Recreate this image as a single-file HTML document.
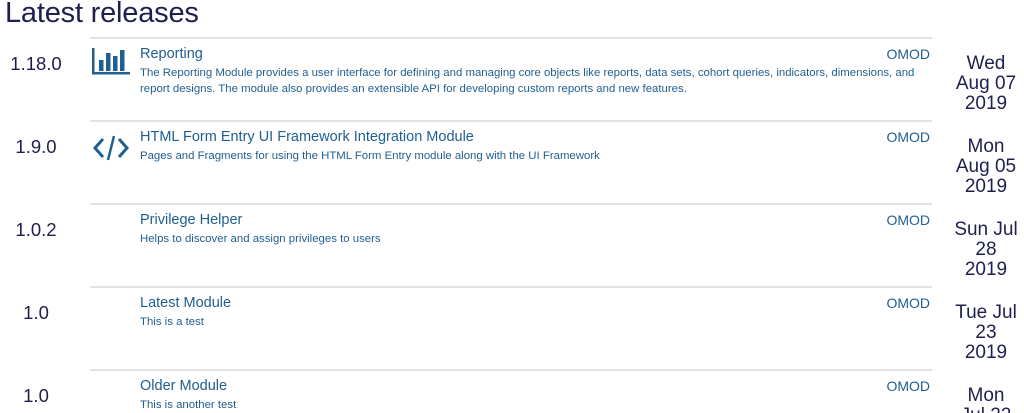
<!DOCTYPE html>
<html><head><style>
html,body{margin:0;width:1024px;height:413px;overflow:hidden}
body{background:#fff;font-family:"Liberation Sans",sans-serif;position:relative}
.a{position:absolute;white-space:nowrap}
h1{position:absolute;left:5px;top:-3px;margin:0;font-weight:normal;font-size:29px;color:#1f1f4f;letter-spacing:-0.2px}
.sep{position:absolute;left:90px;width:842px;height:2px;background:#e2e2e2}
.ver{position:absolute;left:0;width:72px;text-align:center;font-size:18.5px;color:#1f1f4f}
.t{position:absolute;left:140px;font-size:14.5px;color:#1f5f92}
.d{position:absolute;left:140px;font-size:11.4px;line-height:16px;color:#1f5f92}
.o{position:absolute;right:94px;font-size:14px;color:#1f5f92}
.dt{position:absolute;left:944px;width:84px;text-align:center;font-size:19px;line-height:20px;color:#1f1f4f}
</style></head><body>
<h1>Latest releases</h1>
<div class="sep" style="top:37px"></div>
<div class="sep" style="top:120px"></div>
<div class="sep" style="top:203px"></div>
<div class="sep" style="top:286px"></div>
<div class="sep" style="top:369px"></div>

<svg class="a" style="left:90px;top:46px" width="42" height="30"><g fill="#1f5f92"><rect x="2" y="2" width="2.5" height="26"/><rect x="2" y="26" width="38" height="2.5"/><rect x="9" y="14" width="4.5" height="11"/><rect x="16" y="7" width="4.5" height="18"/><rect x="23" y="10" width="4.5" height="15"/><rect x="30" y="4" width="4.5" height="21"/></g></svg>
<svg class="a" style="left:92px;top:134px" width="38" height="28"><g fill="none" stroke="#1f5f92" stroke-width="3"><path d="M11 5 L3 14 L11 23"/><path d="M27 5 L35 14 L27 23"/><path d="M22 2 L16 26" stroke-width="2.5"/></g></svg>

<div class="ver" style="top:53px">1.18.0</div>
<div class="t" style="top:46px">Reporting</div>
<div class="d" style="top:65px">The Reporting Module provides a user interface for defining and managing core objects like reports, data sets, cohort queries, indicators, dimensions, and<br>report designs. The module also provides an extensible API for developing custom reports and new features.</div>
<div class="o" style="top:46px">OMOD</div>
<div class="dt" style="top:54px">Wed<br>Aug 07<br>2019</div>

<div class="ver" style="top:136px">1.9.0</div>
<div class="t" style="top:129px">HTML Form Entry UI Framework Integration Module</div>
<div class="d" style="top:148px">Pages and Fragments for using the HTML Form Entry module along with the UI Framework</div>
<div class="o" style="top:129px">OMOD</div>
<div class="dt" style="top:137px">Mon<br>Aug 05<br>2019</div>

<div class="ver" style="top:219px">1.0.2</div>
<div class="t" style="top:212px">Privilege Helper</div>
<div class="d" style="top:231px">Helps to discover and assign privileges to users</div>
<div class="o" style="top:212px">OMOD</div>
<div class="dt" style="top:220px">Sun Jul<br>28<br>2019</div>

<div class="ver" style="top:302px">1.0</div>
<div class="t" style="top:295px">Latest Module</div>
<div class="d" style="top:314px">This is a test</div>
<div class="o" style="top:295px">OMOD</div>
<div class="dt" style="top:303px">Tue Jul<br>23<br>2019</div>

<div class="ver" style="top:385px">1.0</div>
<div class="t" style="top:378px">Older Module</div>
<div class="d" style="top:397px">This is another test</div>
<div class="o" style="top:378px">OMOD</div>
<div class="dt" style="top:386px">Mon<br>Jul 22<br>2019</div>
</body></html>
